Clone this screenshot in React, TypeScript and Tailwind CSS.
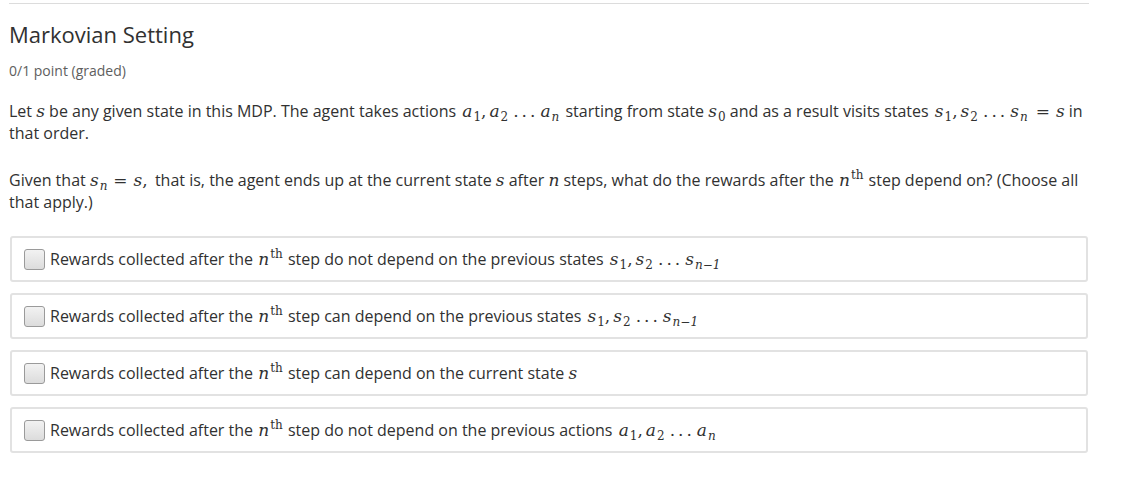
import type { ReactNode } from 'react';

const serif = { fontFamily: '"DejaVu Serif", "Liberation Serif", serif' };

function V({ children }: { children: ReactNode }) {
  return (
    <span className="italic text-[17px] leading-[21px]" style={serif}>
      {children}
    </span>
  );
}

function Sub({ children, italic }: { children: ReactNode; italic?: boolean }) {
  return (
    <span
      className={`text-[12px] leading-[12px] align-[-4px] ml-[1px] ${italic ? 'italic' : 'not-italic'}`}
      style={serif}
    >
      {children}
    </span>
  );
}

function Nth() {
  return (
    <span style={serif} className="mx-[1px]">
      <span className="italic text-[17px] leading-[21px]">n</span>
      <span className="text-[12px] leading-[12px] align-[7px] ml-[1px]">th</span>
    </span>
  );
}

function Comma() {
  return (
    <span className="text-[17px] leading-[21px] mr-[3px]" style={serif}>
      ,
    </span>
  );
}

function Dots() {
  return (
    <span className="text-[17px] leading-[21px] ml-[5px] mr-[2px] tracking-[3px]" style={serif}>
      ...
    </span>
  );
}

function Eq() {
  return (
    <span className="text-[17px] leading-[21px] mx-[6px]" style={serif}>
      =
    </span>
  );
}

function Seq({ v, last }: { v: string; last: string }) {
  return (
    <span className="mx-[2px]">
      <V>{v}</V>
      <Sub>1</Sub>
      <Comma />
      <V>{v}</V>
      <Sub>2</Sub>
      <Dots />
      <V>{v}</V>
      <Sub italic>{last}</Sub>
    </span>
  );
}

const options: ReactNode[] = [
  <>
    Rewards collected after the <Nth /> step do not depend on the previous states <Seq v="s" last="n−1" />
  </>,
  <>
    Rewards collected after the <Nth /> step can depend on the previous states <Seq v="s" last="n−1" />
  </>,
  <>
    Rewards collected after the <Nth /> step can depend on the current state <V>s</V>
  </>,
  <>
    Rewards collected after the <Nth /> step do not depend on the previous actions <Seq v="a" last="n" />
  </>,
];

export default function App() {
  return (
    <div
      className="bg-white w-[1132px] h-[490px] pl-[9px] pt-[3px] text-[#313131]"
      style={{ fontFamily: '"Open Sans", "Noto Sans", sans-serif' }}
    >
      <div className="w-[1080px]">
        <div className="border-t border-[#dcdcdc]" />
        <h2 className="mt-[16px] text-[22px] leading-[28px] text-[#313131]">Markovian Setting</h2>
        <div className="mt-[14px] text-[14px] leading-[18px] text-[#5e5e5e]">0/1 point (graded)</div>

        <p className="mt-[21px] text-[16px] leading-[21px]">
          Let <V>s</V> be any given state in this MDP. The agent takes actions <Seq v="a" last="n" /> starting
          from state <V>s</V>
          <Sub>0</Sub> and as a result visits states <Seq v="s" last="n" />
          <Eq />
          <V>s</V> in that order.
        </p>

        <p className="mt-[25px] text-[16px] leading-[21px]">
          Given that <V>s</V>
          <Sub italic>n</Sub>
          <Eq />
          <V>s</V>
          <Comma /> that is, the agent ends up at the current state <V>s</V> after <V>n</V> steps, what do the
          rewards after the <Nth /> step depend on? (Choose all that apply.)
        </p>

        <div className="mt-[23px] flex flex-col gap-[11px] pl-[1px] pr-[1px]">
          {options.map((opt, i) => (
            <label
              key={i}
              className="flex items-center h-[46px] border-2 border-[#e2e2e2] rounded-[3px] pl-[12px] text-[16px]"
            >
              <span className="w-[21px] h-[21px] rounded-[3px] border border-[#9a9a9a] bg-gradient-to-b from-[#f2f2f2] to-[#dcdcdc] mr-[5px] shrink-0" />
              <span className="leading-[21px]">{opt}</span>
            </label>
          ))}
        </div>
      </div>
    </div>
  );
}
